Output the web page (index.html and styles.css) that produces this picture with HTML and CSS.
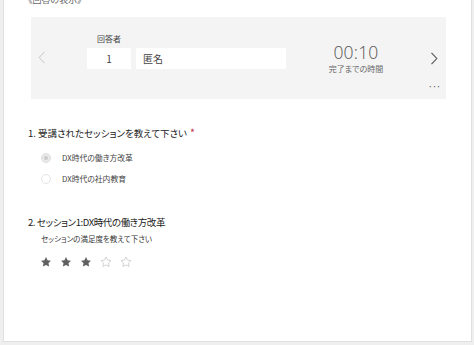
FILE: index.html
```html
<!DOCTYPE html>
<html lang="ja">
<head>
<meta charset="utf-8">
<link rel="stylesheet" href="styles.css">
</head>
<body>
<div class="card">
  <div class="top-title">《回答の表示》</div>
  <div class="panel">
    <button class="nav nav-prev" aria-label="前へ">
      <svg width="8" height="13" viewBox="0 0 8 13"><polyline points="6.5,0.8 1.2,6.5 6.5,12.2" fill="none" stroke="#c4c4c4" stroke-width="1"/></svg>
    </button>
    <div class="responder">
      <div class="responder-label">回答者</div>
      <div class="responder-fields">
        <div class="field field-num">1</div>
        <div class="field field-name">匿名</div>
      </div>
    </div>
    <div class="timer">
      <div class="timer-value">00:10</div>
      <div class="timer-label">完了までの時間</div>
    </div>
    <button class="nav nav-next" aria-label="次へ">
      <svg width="8" height="13" viewBox="0 0 8 13"><polyline points="1.5,0.8 6.8,6.5 1.5,12.2" fill="none" stroke="#555" stroke-width="1.1"/></svg>
    </button>
    <div class="more">···</div>
  </div>

  <div class="question q1">
    <div class="q-title">1. 受講されたセッションを教えて下さい<span class="req">*</span></div>
    <div class="options">
      <div class="option">
        <span class="radio radio-checked"><span class="dot"></span></span>
        <span class="opt-text">DX時代の働き方改革</span>
      </div>
      <div class="option">
        <span class="radio"></span>
        <span class="opt-text">DX時代の社内教育</span>
      </div>
    </div>
  </div>

  <div class="question q2">
    <div class="q-title">2. セッション1:DX時代の働き方改革</div>
    <div class="q-sub">セッションの満足度を教えて下さい</div>
    <div class="stars">
      <svg class="star" viewBox="0 0 24 24"><path class="full" d="M12 2l3.09 6.26L22 9.27l-5 4.87 1.18 6.88L12 17.77l-6.18 3.25L7 14.14 2 9.27l6.91-1.01L12 2z"/></svg>
      <svg class="star" viewBox="0 0 24 24"><path class="full" d="M12 2l3.09 6.26L22 9.27l-5 4.87 1.18 6.88L12 17.77l-6.18 3.25L7 14.14 2 9.27l6.91-1.01L12 2z"/></svg>
      <svg class="star" viewBox="0 0 24 24"><path class="full" d="M12 2l3.09 6.26L22 9.27l-5 4.87 1.18 6.88L12 17.77l-6.18 3.25L7 14.14 2 9.27l6.91-1.01L12 2z"/></svg>
      <svg class="star" viewBox="0 0 24 24"><path class="empty" d="M12 2l3.09 6.26L22 9.27l-5 4.87 1.18 6.88L12 17.77l-6.18 3.25L7 14.14 2 9.27l6.91-1.01L12 2z"/></svg>
      <svg class="star" viewBox="0 0 24 24"><path class="empty" d="M12 2l3.09 6.26L22 9.27l-5 4.87 1.18 6.88L12 17.77l-6.18 3.25L7 14.14 2 9.27l6.91-1.01L12 2z"/></svg>
    </div>
  </div>
</div>
</body>
</html>
```
FILE: styles.css
```css
html, body {
  margin: 0;
  padding: 0;
  height: 100%;
}
body {
  background: #efefef;
  font-family: "Noto Sans CJK JP", "Noto Sans", sans-serif;
  font-feature-settings: "palt";
  color: #333;
  overflow: hidden;
}
.card {
  box-sizing: border-box;
  height: calc(100vh - 3px);
  margin: 0 2px 0 3px;
  background: #fff;
  border: 1px solid #e0e0e0;
  border-top: none;
  padding: 0 0 0 24px;
  overflow: hidden;
}
.top-title {
  font-size: 9px;
  line-height: 12px;
  margin-top: -6px;
  color: #666;
}
.panel {
  position: relative;
  margin-top: 11px;
  margin-left: 3px;
  width: 415px;
  height: 82px;
  background: #f4f4f4;
  display: flex;
  align-items: center;
}
.nav {
  width: 24px;
  height: 24px;
  padding: 0;
  border: none;
  background: none;
  display: flex;
  align-items: center;
  justify-content: center;
}
.nav-prev { margin-top: -2px; margin-left: -1px; }
.responder {
  align-self: flex-start;
  margin-top: 17px;
  margin-left: 33px;
  display: flex;
  flex-direction: column;
}
.responder-label {
  width: 44px;
  text-align: center;
  font-size: 8px;
  line-height: 10px;
  color: #444;
  margin-bottom: 4px;
}
.responder-fields {
  display: flex;
  gap: 5px;
}
.field {
  box-sizing: border-box;
  height: 21px;
  background: #fff;
  font-size: 10px;
  line-height: 21px;
  color: #444;
}
.field-num {
  width: 44px;
  text-align: center;
}
.field-name {
  width: 150px;
  padding-left: 7px;
}
.timer {
  width: 60px;
  margin-left: 40px;
  text-align: center;
  color: #555;
}
.timer-value {
  font-family: "Open Sans", "Noto Sans", sans-serif;
  font-size: 17.5px;
  font-weight: 300;
  line-height: 20px;
  letter-spacing: 0.2px;
}
.timer-label {
  font-size: 8px;
  line-height: 11px;
  margin-top: 1px;
  color: #666;
}
.nav-next {
  margin-left: auto;
  margin-right: 0;
}
.more {
  position: absolute;
  right: 6px;
  bottom: 7px;
  font-size: 9px;
  line-height: 10px;
  color: #555;
  letter-spacing: -1px;
}
.question .q-title {
  font-size: 9.5px;
  line-height: 14px;
  color: #222;
}
.req {
  color: #c4314b;
  margin-left: 3px;
  font-size: 10.5px;
}
.q1 { margin-top: 27px; }
.options {
  margin-top: 7px;
  margin-left: 13px;
}
.option {
  height: 21px;
  display: flex;
  align-items: center;
}
.radio {
  box-sizing: border-box;
  width: 10px;
  height: 10px;
  border-radius: 50%;
  border: 1px solid #e4e4e4;
  background: #fff;
  display: flex;
  align-items: center;
  justify-content: center;
  margin-right: 11px;
}
.radio-checked {
  background: #e9e9e9;
  border-color: #dedede;
}
.radio-checked .dot {
  width: 4px;
  height: 4px;
  border-radius: 50%;
  background: #cacaca;
}
.opt-text {
  font-size: 7.8px;
  color: #444;
}
.q2 { margin-top: 26px; }
.q2 .q-title { letter-spacing: -0.4px; }
.q-sub {
  margin-top: 4px;
  margin-left: 13px;
  font-size: 7.5px;
  line-height: 11px;
  color: #333;
}
.stars {
  margin-top: 12px;
  margin-left: 12px;
  display: flex;
  gap: 8px;
}
.star {
  width: 12px;
  height: 12px;
}
.star .full { fill: #606060; }
.star .empty {
  fill: none;
  stroke: #c8c8c8;
  stroke-width: 1.6;
}
```
